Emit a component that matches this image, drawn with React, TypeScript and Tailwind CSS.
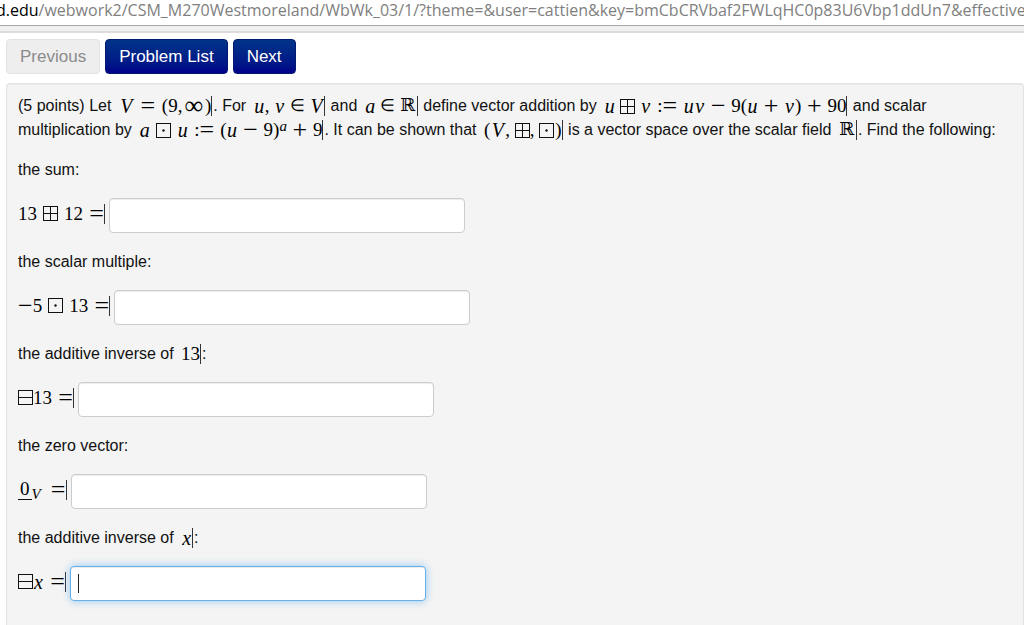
import React, { useState } from 'react';

type BoxKind = 'plus' | 'dot' | 'minus';

interface ChildrenProps {
  children: React.ReactNode;
}

interface AnswerProps extends ChildrenProps {
  id: string;
  label: React.ReactNode;
  value: string;
  onChange: (id: string, value: string) => void;
  autoFocus?: boolean;
}

// Formula, closed by the thin bar that MathJax leaves behind it
function Formula({ children, className = '' }: ChildrenProps & { className?: string }) {
  return (
    <span className={`inline-flex h-6 items-center whitespace-nowrap align-top font-['Liberation_Serif',serif] text-[19px] leading-6 text-black ${className}`}>
      {children}
      <span className="h-5 w-px bg-[#333333]" />
    </span>
  );
}

// Formula inside running text
function InlineFormula({ children }: ChildrenProps) {
  return <Formula className="mr-px ml-[3px]">{children}</Formula>;
}

function Var({ children }: ChildrenProps) {
  return <i className="min-w-[11px] text-center text-[20px]">{children}</i>;
}

function BigVar({ children }: ChildrenProps) {
  return <i className="min-w-[15px] text-center text-[20px]">{children}</i>;
}

// Binary operator
function Op({ children }: ChildrenProps) {
  return <span className="mx-[5px] flex w-4 justify-center text-[26px]">{children}</span>;
}

// Relation, set a little wider than an operator
function Rel({ children }: ChildrenProps) {
  return <span className="mx-[6px] flex w-4 justify-center text-[26px]">{children}</span>;
}

function In() {
  return <span className="mx-[5px] flex w-3.5 justify-center text-[17px]">∈</span>;
}

function Assign() {
  return (
    <span className="mx-[6px] flex w-5 items-center justify-center">
      :<span className="text-[26px]">=</span>
    </span>
  );
}

function EndEquals() {
  return <span className="ml-[6px] flex w-[15px] justify-end text-[26px]">=</span>;
}

function Reals() {
  return <span className="font-['DejaVu_Math_TeX_Gyre','DejaVu_Serif',serif] text-[18px]">ℝ</span>;
}

function Box({ kind, className = '' }: { kind: BoxKind; className?: string }) {
  return (
    <svg viewBox="0 0 15 15" className={`h-[15px] w-[15px] shrink-0 ${className}`} fill="none" stroke="#111111">
      <rect x="0.5" y="0.5" width="14" height="14" />
      {kind !== 'dot' && <path d="M1 7.5H14" />}
      {kind === 'plus' && <path d="M7.5 1V14" />}
      {kind === 'dot' && <circle cx="7.5" cy="7.5" r="1.2" fill="#111111" stroke="none" />}
    </svg>
  );
}

function Answer({ id, label, value, onChange, autoFocus, children }: AnswerProps) {
  const showCaret = autoFocus && value === '';

  return (
    <div className="mb-[17px]">
      <p className="mb-4 h-6 leading-6">{label}</p>
      <div className="flex items-center gap-1">
        <label htmlFor={id} className="flex pb-1">{children}</label>
        <div className="relative">
          <input
            id={id}
            type="text"
            value={value}
            autoFocus={autoFocus}
            onChange={(e) => onChange(id, e.target.value)}
            className={`block h-[35px] w-[356px] rounded border border-[#cccccc] bg-white px-[7px] text-[16px] shadow-[inset_0_1px_1px_rgba(0,0,0,0.075)] outline-none focus:border-[#66afe9] focus:shadow-[inset_0_1px_1px_rgba(0,0,0,0.075),0_0_8px_rgba(82,168,236,0.6)] ${showCaret ? 'caret-transparent' : ''}`}
          />
          {showCaret && <span className="pointer-events-none absolute top-2 left-2 h-[19px] w-px bg-[#222222]" />}
        </div>
      </div>
    </div>
  );
}

export default function App() {
  const [answers, setAnswers] = useState<Record<string, string>>({
    sum: '',
    multiple: '',
    inverse13: '',
    zero: '',
    inverseX: ''
  });

  const handleChange = (id: string, value: string) => {
    setAnswers(prev => ({
      ...prev,
      [id]: value
    }));
  };

  return (
    <div className="flex min-h-screen flex-col bg-white font-['Liberation_Sans',sans-serif] text-[16px] text-[#111111]">
      <header className="h-[33px] overflow-hidden border-b-2 border-[#dcdcdc] bg-[#f0f0f0]">
        <div className="h-[26px] overflow-hidden whitespace-nowrap border-b border-[#a9a9a9] bg-white font-['Open_Sans',sans-serif] text-[16px] leading-[21px] text-[#808080]">
          <span className="-ml-1 text-black">d.edu</span>
          /webwork2/CSM_M270Westmoreland/WbWk_03/1/?theme=&amp;user=cattien&amp;key=bmCbCRVbaf2FWLqHC0p83U6Vbp1ddUn7&amp;effective
        </div>
      </header>

      <nav className="flex gap-[5px] px-1.5 pt-1.5 pb-[9px] text-[17px]">
        <button type="button" disabled className="h-[35px] rounded border border-[#e2e2e2] bg-[#eeeeee] px-[13px] text-[#8b8b8b]">
          Previous
        </button>
        <button type="button" className="h-[35px] rounded border border-[#001a70] bg-linear-to-b from-[#003388] to-[#000088] px-[13px] text-white">
          Problem List
        </button>
        <button type="button" className="h-[35px] rounded border border-[#001a70] bg-linear-to-b from-[#003388] to-[#000088] px-[13px] text-white">
          Next
        </button>
      </nav>

      <main className="ml-1.5 flex-1 rounded-t border border-b-0 border-[#e3e3e3] bg-[#f4f4f4] pt-[10px] pr-[11px] pl-[11px] shadow-[inset_0_1px_1px_rgba(0,0,0,0.05)]">
        <p className="mb-4 leading-6">
          (5 points) Let{' '}
          <InlineFormula><BigVar>V</BigVar><Rel>=</Rel>(9,<span className="mx-0.5 text-[26px]">∞</span>)</InlineFormula>
          . For{' '}
          <InlineFormula><Var>u</Var>,&nbsp;<Var>v</Var><In /><BigVar>V</BigVar></InlineFormula>
          {' '}and{' '}
          <InlineFormula><Var>a</Var><In /><Reals /></InlineFormula>
          {' '}define vector addition by{' '}
          <InlineFormula>
            <Var>u</Var><Box kind="plus" className="mx-[5px]" /><Var>v</Var><Assign /><Var>u</Var><Var>v</Var>
            <Op>−</Op>9(<Var>u</Var><Op>+</Op><Var>v</Var>)<Op>+</Op>90
          </InlineFormula>
          {' '}and scalar multiplication by{' '}
          <InlineFormula>
            <Var>a</Var><Box kind="dot" className="mx-[6px]" /><Var>u</Var><Assign />(<Var>u</Var><Op>−</Op>9)
            <i className="pb-2 text-[15px]">a</i><Op>+</Op>9
          </InlineFormula>
          . It can be shown that{' '}
          <InlineFormula>(<BigVar>V</BigVar>,&nbsp;<Box kind="plus" />,&nbsp;<Box kind="dot" className="mr-px" />)</InlineFormula>
          {' '}is a vector space over the scalar field{' '}
          <InlineFormula><Reals /></InlineFormula>
          . Find the following:
        </p>

        <Answer id="sum" label="the sum:" value={answers.sum} onChange={handleChange}>
          <Formula>13<Box kind="plus" className="mx-[6px]" />12<EndEquals /></Formula>
        </Answer>
        <Answer id="multiple" label="the scalar multiple:" value={answers.multiple} onChange={handleChange}>
          <Formula><span className="text-[26px]">−</span>5<Box kind="dot" className="mx-[6px]" />13<EndEquals /></Formula>
        </Answer>
        <Answer
          id="inverse13"
          label={<>the additive inverse of <InlineFormula>13</InlineFormula>:</>}
          value={answers.inverse13}
          onChange={handleChange}
        >
          <Formula><Box kind="minus" />13<EndEquals /></Formula>
        </Answer>
        <Answer id="zero" label="the zero vector:" value={answers.zero} onChange={handleChange}>
          <Formula>
            <span className="border-b border-[#111111] px-0.5 leading-5">0</span>
            <i className="min-w-[13px] pt-2 text-[15px]">V</i><EndEquals />
          </Formula>
        </Answer>
        <Answer
          id="inverseX"
          label={<>the additive inverse of <InlineFormula><Var>x</Var></InlineFormula>:</>}
          value={answers.inverseX}
          onChange={handleChange}
          autoFocus
        >
          <Formula><Box kind="minus" /><Var>x</Var><EndEquals /></Formula>
        </Answer>
      </main>
    </div>
  );
}
